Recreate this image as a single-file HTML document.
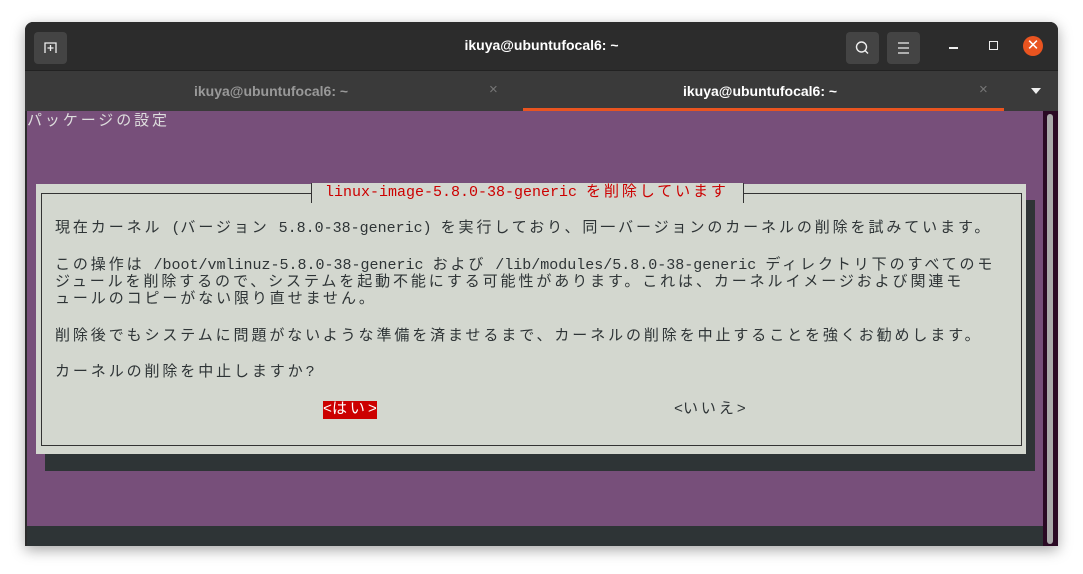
<!DOCTYPE html>
<html><head><meta charset="utf-8"><style>
*{margin:0;padding:0;box-sizing:border-box}
body{width:1083px;height:574px;background:#fff;position:relative;overflow:hidden;font-family:"Liberation Sans","Noto Sans CJK JP",sans-serif}
.win{position:absolute;left:25px;top:22px;width:1033px;height:524px;background:#2c2c2c;border-radius:8px 8px 0 0;box-shadow:0 4px 14px rgba(0,0,0,.35);overflow:hidden}
.tb{position:absolute;left:0;top:0;width:100%;height:48px;background:#2c2c2c}
.btn{position:absolute;top:10px;width:33px;height:32px;background:#444;border-radius:4px}
.title{position:absolute;left:0;width:100%;top:15px;text-align:center;color:#fff;font-weight:bold;font-size:14px}
.tabs{position:absolute;left:0;top:48px;width:100%;height:41px;background:#3a3a3a;border-top:1px solid #222}
.tab{position:absolute;top:12px;font-size:14px;font-weight:bold}
.term{position:absolute;left:2px;top:89px;width:1016px;height:435px;background:#774f7a;font-family:"Liberation Mono","Noto Sans CJK JP",monospace;font-size:15px}
.sb{position:absolute;left:1018px;top:89px;width:15px;height:435px;background:#2b0a24}
.t{position:absolute;white-space:pre;line-height:18px}
.j{letter-spacing:2.9px}
</style></head><body>
<div class="win">
 <div class="tb">
  <div class="btn" style="left:9px"><svg width="33" height="32"><path d="M11 21V11h11v10M16.5 13v6M13.5 16h6" stroke="#eee" stroke-width="1.3" fill="none"/></svg></div>
  <div class="title">ikuya@ubuntufocal6: ~</div>
  <div class="btn" style="left:821px"><svg width="33" height="32"><circle cx="15.5" cy="15" r="5" stroke="#eee" stroke-width="1.4" fill="none"/><path d="M19 18.5l3 3" stroke="#eee" stroke-width="1.4"/></svg></div>
  <div class="btn" style="left:862px"><svg width="33" height="32"><path d="M11 11h11M11 16h11M11 21h11" stroke="#eee" stroke-width="1.3"/></svg></div>
  <div style="position:absolute;left:924px;top:25px;width:9px;height:1.5px;background:#eee"></div>
  <div style="position:absolute;left:964px;top:19px;width:9px;height:9px;border:1.4px solid #eee"></div>
  <div style="position:absolute;left:998px;top:14px;width:20px;height:20px;border-radius:50%;background:#e95420;color:#fff;font-size:15px;text-align:center;line-height:20px">✕</div>
 </div>
 <div class="tabs">
  <div class="tab" style="left:169px;color:#999">ikuya@ubuntufocal6: ~</div>
  <div style="position:absolute;left:464px;top:10px;color:#777;font-size:15px">×</div>
  <div class="tab" style="left:658px;color:#fff">ikuya@ubuntufocal6: ~</div>
  <div style="position:absolute;left:954px;top:10px;color:#777;font-size:15px">×</div>
  <div style="position:absolute;left:1006px;top:17px;border:5px solid transparent;border-top:6px solid #eee"></div>
  <div style="position:absolute;left:498px;top:37px;width:481px;height:3px;background:#e95420"></div>
 </div>
 <div class="term">
  <div class="t" style="left:0;top:2px;color:#ddd"><span class="j">パッケージの設定</span></div>
  <div style="position:absolute;left:18px;top:89px;width:990px;height:271px;background:#2e3436"></div>
  <div style="position:absolute;left:9px;top:73px;width:990px;height:270px;background:#d3d7cf"></div>
  <div style="position:absolute;left:14px;top:82px;width:981px;height:253px;border:1px solid #333"></div>
  <div style="position:absolute;left:284px;top:72px;width:433px;height:20px;background:#d3d7cf;border-left:1px solid #333;border-right:1px solid #333"></div>
  <div class="t" style="left:298px;top:73px;color:#cc0000">linux-image-5.8.0-38-generic <span class="j">を削除しています</span></div>
  <div class="t" style="left:28px;top:109px;color:#2e3436"><span class="j">現在カーネル</span> (<span class="j">バージョン</span> 5.8.0-38-generic) <span class="j">を実行しており、同一バージョンのカーネルの削除を試みています。</span></div>
  <div class="t" style="left:28px;top:146px;color:#2e3436"><span class="j">この操作は</span> /boot/vmlinuz-5.8.0-38-generic <span class="j">および</span> /lib/modules/5.8.0-38-generic <span class="j">ディレクトリ下のすべてのモ</span></div>
  <div class="t" style="left:28px;top:163px;color:#2e3436"><span class="j">ジュールを削除するので、システムを起動不能にする可能性があります。これは、カーネルイメージおよび関連モ</span></div>
  <div class="t" style="left:28px;top:180px;color:#2e3436"><span class="j">ュールのコピーがない限り直せません。</span></div>
  <div class="t" style="left:28px;top:217px;color:#2e3436"><span class="j">削除後でもシステムに問題がないような準備を済ませるまで、カーネルの削除を中止することを強くお勧めします。</span></div>
  <div class="t" style="left:28px;top:253px;color:#2e3436"><span class="j">カーネルの削除を中止しますか</span>?</div>
  <div class="t" style="left:296px;top:290px;color:#fff;background:#cc0000;height:18px">&lt;<span class="j">はい</span>&gt;</div>
  <div class="t" style="left:647px;top:290px;color:#2e3436">&lt;<span class="j">いいえ</span>&gt;</div>
  <div style="position:absolute;left:0;top:415px;width:1016px;height:20px;background:#2e3436"></div>
 </div>
 <div class="sb"><div style="position:absolute;left:4px;top:3px;width:6px;height:430px;background:#aaa;border-radius:3px"></div></div>
</div>
</body></html>
